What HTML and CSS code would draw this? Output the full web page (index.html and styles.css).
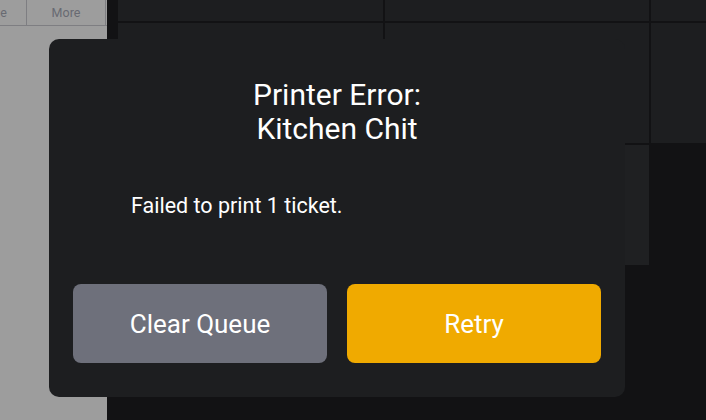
FILE: index.html
```html
<!doctype html>
<html>
<head>
  <meta charset="utf-8">
  <link rel="stylesheet" href="styles.css">
</head>
<body>
<div class="screen">
  <div class="side">
    <div class="side_tabs">
      <div class="side_tab side_tab_cut">e</div>
      <div class="side_tab">More</div>
    </div>
  </div>
  <div class="floor">
    <div class="tile t_a1"></div>
    <div class="tile t_b1"></div>
    <div class="tile t_c1"></div>
    <div class="tile t_a2"></div>
    <div class="tile t_b2"></div>
    <div class="tile t_c2"></div>
    <div class="tile t_a3"></div>
    <div class="tile t_b3"></div>
  </div>
</div>

<div class="dialog">
  <div class="dialog_title">Printer Error:<br>Kitchen Chit</div>
  <div class="dialog_msg">Failed to print 1 ticket.</div>
  <div class="dialog_btns">
    <div class="btn btn_clear">Clear Queue</div>
    <div class="btn btn_retry">Retry</div>
  </div>
</div>
</body>
</html>
```

FILE: styles.css
```css
html, body {
  margin: 0;
  padding: 0;
  width: 706px;
  height: 420px;
  overflow: hidden;
  background: #121214;
  font-family: Roboto, "Liberation Sans", sans-serif;
}

.screen {
  display: flex;
  height: 420px;
}

/* left gray panel */
.side {
  width: 107px;
  height: 420px;
  background: #9d9d9d;
  overflow: hidden;
}
.side_tabs {
  display: flex;
  height: 25px;
  border-bottom: 1px solid #7e7e82;
  margin-left: -53px;
}
.side_tab {
  width: 78px;
  border-right: 1px solid #7e7e82;
  color: #686a72;
  font-size: 12.5px;
  line-height: 26px;
  text-align: center;
}
.side_tab_cut {
  text-align: right;
  padding-right: 19px;
  width: 60px;
}

/* table tiles */
.floor {
  flex: 1;
  padding-left: 11px;
  display: grid;
  grid-template-columns: 265px 264px 60px;
  grid-template-rows: 21px 120px 120px;
  gap: 2px;
  align-content: start;
  overflow: hidden;
}
.tile {
  background: #1d1e20;
}
.t_a1 { grid-column: 1; grid-row: 1; }
.t_b1 { grid-column: 2; grid-row: 1; }
.t_c1 { grid-column: 3; grid-row: 1; }
.t_a2 { grid-column: 1; grid-row: 2; }
.t_b2 { grid-column: 2; grid-row: 2; }
.t_c2 { grid-column: 3; grid-row: 2; }
.t_a3 { grid-column: 1; grid-row: 3; }
.t_b3 { grid-column: 2; grid-row: 3; background: #1f2022; }

/* error dialog, sits over the floor */
.dialog {
  position: absolute;
  left: 49px;
  top: 39px;
  width: 576px;
  height: 358px;
  box-sizing: border-box;
  padding: 39px 24px 34px;
  background: #1d1e20;
  border-radius: 10px;
  display: flex;
  flex-direction: column;
  color: #fff;
}
.dialog_title {
  font-size: 30px;
  line-height: 34px;
  text-align: center;
}
.dialog_msg {
  margin-top: 48px;
  padding-left: 58px;
  font-size: 21.5px;
  line-height: 24px;
}
.dialog_btns {
  margin-top: auto;
  display: flex;
  gap: 20px;
}
.btn {
  flex: 1;
  height: 79px;
  border-radius: 8px;
  display: flex;
  align-items: center;
  justify-content: center;
  font-size: 26px;
  color: #fff;
}
.btn_clear {
  background: #6e707b;
}
.btn_retry {
  background: #f0aa00;
}
```
